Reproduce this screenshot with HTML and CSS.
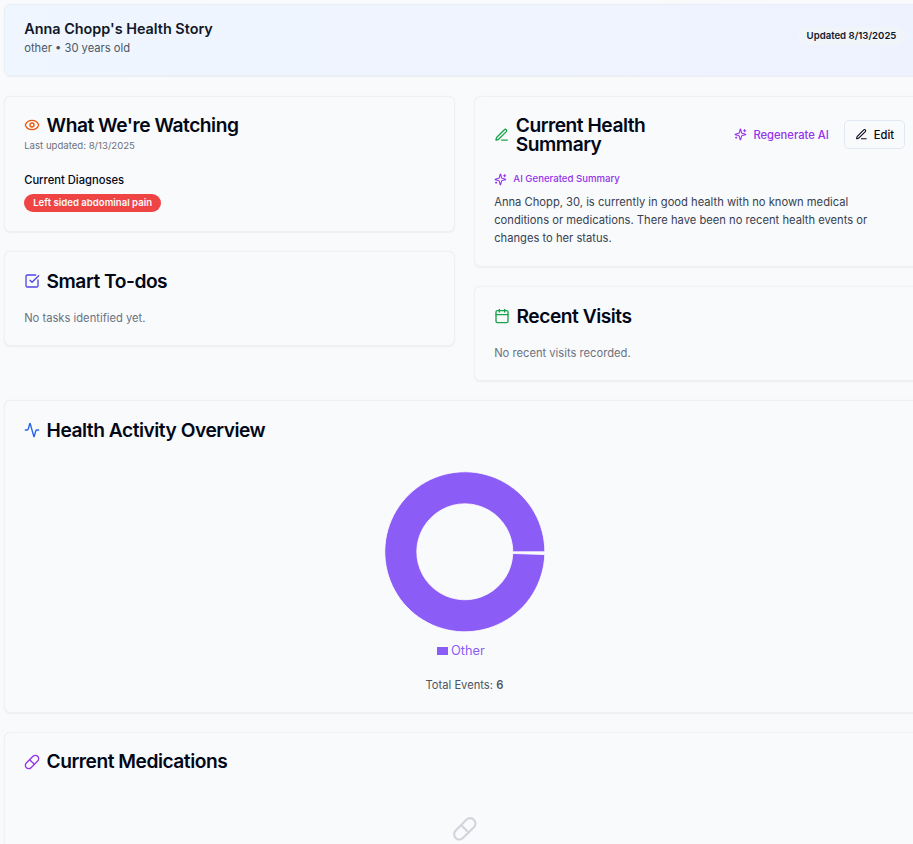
FILE: index.html
```
<!DOCTYPE html>
<html lang="en">

<head>
    <meta charset="UTF-8">
    <meta name="viewport" content="width=device-width, initial-scale=1.0">
    <title>Health Story</title>
    <link rel="stylesheet" href="styles.css">
</head>

<body>
    <div class="page">
        <header class="card story">
            <div>
                <h1>Anna Chopp's Health Story</h1>
                <p>other • 30 years old</p>
            </div>
            <span class="badge updated">Updated 8/13/2025</span>
        </header>

        <div class="columns">
            <div class="column">
                <section class="card">
                    <h3 class="title">
                        <svg class="icon orange" viewBox="0 0 24 24"><path d="M2.062 12.348a1 1 0 0 1 0-.696 10.75 10.75 0 0 1 19.876 0 1 1 0 0 1 0 .696 10.75 10.75 0 0 1-19.876 0"/><circle cx="12" cy="12" r="3"/></svg>
                        <span>What We're Watching</span>
                    </h3>
                    <p class="date">Last updated: 8/13/2025</p>
                    <div class="content">
                        <h4>Current Diagnoses</h4>
                        <span class="badge danger">Left sided abdominal pain</span>
                    </div>
                </section>

                <section class="card">
                    <h3 class="title">
                        <svg class="icon indigo" viewBox="0 0 24 24"><path d="M21 10.5V19a2 2 0 0 1-2 2H5a2 2 0 0 1-2-2V5a2 2 0 0 1 2-2h12.5"/><path d="m9 11 3 3L22 4"/></svg>
                        <span>Smart To-dos</span>
                    </h3>
                    <p class="content empty">No tasks identified yet.</p>
                </section>
            </div>

            <div class="column">
                <section class="card">
                    <div class="summary-head">
                        <h3 class="title">
                            <svg class="icon green" viewBox="0 0 24 24"><path d="M12 20h9"/><path d="M16.376 3.622a1 1 0 0 1 3.002 3.002L7.368 18.635a2 2 0 0 1-.855.506l-2.872.838a.5.5 0 0 1-.62-.62l.838-2.872a2 2 0 0 1 .506-.854z"/></svg>
                            <span>Current Health Summary</span>
                        </h3>
                        <div class="actions">
                            <button class="btn ghost">
                                <svg class="icon small" viewBox="0 0 24 24"><path d="M9.937 15.5A2 2 0 0 0 8.5 14.063l-6.135-1.582a.5.5 0 0 1 0-.962L8.5 9.936A2 2 0 0 0 9.937 8.5l1.582-6.135a.5.5 0 0 1 .963 0L14.063 8.5A2 2 0 0 0 15.5 9.937l6.135 1.581a.5.5 0 0 1 0 .964L15.5 14.063a2 2 0 0 0-1.437 1.437l-1.582 6.135a.5.5 0 0 1-.963 0z"/><path d="M20 3v4M22 5h-4M4 17v2M5 18H3"/></svg>
                                Regenerate AI
                            </button>
                            <button class="btn outline">
                                <svg class="icon small" viewBox="0 0 24 24"><path d="M12 20h9"/><path d="M16.376 3.622a1 1 0 0 1 3.002 3.002L7.368 18.635a2 2 0 0 1-.855.506l-2.872.838a.5.5 0 0 1-.62-.62l.838-2.872a2 2 0 0 1 .506-.854z"/></svg>
                                Edit
                            </button>
                        </div>
                    </div>
                    <div class="content">
                        <div class="ai-label">
                            <svg class="icon small" viewBox="0 0 24 24"><path d="M9.937 15.5A2 2 0 0 0 8.5 14.063l-6.135-1.582a.5.5 0 0 1 0-.962L8.5 9.936A2 2 0 0 0 9.937 8.5l1.582-6.135a.5.5 0 0 1 .963 0L14.063 8.5A2 2 0 0 0 15.5 9.937l6.135 1.581a.5.5 0 0 1 0 .964L15.5 14.063a2 2 0 0 0-1.437 1.437l-1.582 6.135a.5.5 0 0 1-.963 0z"/><path d="M20 3v4M22 5h-4M4 17v2M5 18H3"/></svg>
                            AI Generated Summary
                        </div>
                        <p class="summary">Anna Chopp, 30, is currently in good health with no known medical conditions or medications. There have been no recent health events or changes to her status.</p>
                    </div>
                </section>

                <section class="card">
                    <h3 class="title">
                        <svg class="icon green" viewBox="0 0 24 24"><path d="M8 2v4M16 2v4M3 10h18"/><rect x="3" y="4" width="18" height="18" rx="2"/></svg>
                        <span>Recent Visits</span>
                    </h3>
                    <p class="content empty">No recent visits recorded.</p>
                </section>
            </div>
        </div>

        <section class="card">
            <h3 class="title">
                <svg class="icon blue" viewBox="0 0 24 24"><path d="M22 12h-2.48a2 2 0 0 0-1.93 1.46l-2.35 8.36a.25.25 0 0 1-.48 0L9.24 2.18a.25.25 0 0 0-.48 0l-2.35 8.36A2 2 0 0 1 4.49 12H2"/></svg>
                <span>Health Activity Overview</span>
            </h3>
            <div class="content chart">
                <!-- ring from 0 to 358 degrees -->
                <svg class="donut" width="202" height="202" viewBox="-101 -101 202 202">
                    <path d="M100 0A100 100 0 1 0 99.939 3.49L59.963 2.094A60 60 0 1 1 60 0Z"/>
                </svg>
                <div class="legend"><i></i>Other</div>
            </div>
            <p class="total">Total Events: <b>6</b></p>
        </section>

        <section class="card">
            <h3 class="title">
                <svg class="icon purple" viewBox="0 0 24 24"><path d="m10.5 20.5 10-10a4.95 4.95 0 1 0-7-7l-10 10a4.95 4.95 0 1 0 7 7Z"/><path d="m8.5 8.5 7 7"/></svg>
                <span>Current Medications</span>
            </h3>
            <div class="content no-meds">
                <svg class="icon large" viewBox="0 0 24 24"><path d="m10.5 20.5 10-10a4.95 4.95 0 1 0-7-7l-10 10a4.95 4.95 0 1 0 7 7Z"/><path d="m8.5 8.5 7 7"/></svg>
            </div>
        </section>
    </div>
</body>

</html>
```
FILE: styles.css
```
* {
    box-sizing: border-box;
}

html {
    overflow: hidden;
}

body {
    margin: 0;
    height: 844px;
    overflow: hidden;
    background: #f9fafc;
    color: #020817;
    font-family: Inter, "Liberation Sans", sans-serif;
}

h1, h3, h4, p {
    margin: 0;
}

/* compact view of the dashboard */
.page {
    zoom: 0.8;
    width: 1151px;
    margin-left: 5px;
    padding-top: 5px;
    display: flex;
    flex-direction: column;
    gap: 24px;
    font-size: 14px;
    line-height: 20px;
}

.card {
    padding: 24px;
    border: 1px solid #f0f1f4;
    border-radius: 8px;
    background: #f9fafc;
    box-shadow: 0 1px 2px rgba(0, 0, 0, 0.05);
}

.story {
    display: flex;
    justify-content: space-between;
    align-items: flex-start;
    height: 90.4px;
    padding-top: 16px;
    padding-right: 23px;
    border-color: #e9effa;
    background: linear-gradient(to right, #eff6ff, #eef2ff);
}

.story h1 {
    font-size: 18px;
    font-weight: 600;
    line-height: 28px;
    color: #111827;
}

.story p {
    color: #4b5563;
}

.badge {
    display: inline-block;
    padding: 2px 10px;
    border: 1px solid transparent;
    border-radius: 99px;
    font-size: 12px;
    font-weight: 600;
    line-height: 16px;
}

.updated {
    margin-top: 12px;
    background: #f1f4f9;
    color: #0f172a;
}

.danger {
    display: table;
    margin-top: 8px;
    background: #ef4444;
    color: #f8fafc;
}

.columns {
    display: grid;
    grid-template-columns: 1fr 1fr;
    gap: 24px;
}

.column {
    display: flex;
    flex-direction: column;
    gap: 24px;
}

.title {
    display: flex;
    align-items: center;
    gap: 8px;
    font-size: 24px;
    font-weight: 600;
    line-height: 24px;
    letter-spacing: -0.025em;
}

.icon {
    width: 20px;
    height: 20px;
    fill: none;
    stroke: currentColor;
    stroke-width: 2;
    stroke-linecap: round;
    stroke-linejoin: round;
}

.small {
    width: 16px;
    height: 16px;
    flex: none;
}

.large {
    width: 32px;
    height: 32px;
}

.orange { color: #ea580c; }
.indigo { color: #4f46e5; }
.green { color: #16a34a; }
.blue { color: #2563eb; }
.purple { color: #9333ea; }

.date {
    margin-top: 6px;
    font-size: 12px;
    line-height: 16px;
    color: #6b7280;
}

.content {
    margin-top: 24px;
}

h4 {
    font-size: 14px;
    font-weight: 500;
}

.empty {
    color: #6b7280;
}

.summary-head {
    display: flex;
    align-items: center;
    justify-content: space-between;
}

.actions {
    display: flex;
    flex: none;
    gap: 8px;
}

.btn {
    display: flex;
    align-items: center;
    gap: 8px;
    height: 36px;
    padding: 0 12px;
    border: 0;
    border-radius: 6px;
    background: none;
    font: 500 14px/20px Inter, sans-serif;
}

.ghost {
    padding-right: 11px;
    color: #9333ea;
}

.outline {
    border: 1px solid #e2e8f0;
    color: #020817;
}

.ai-label {
    display: flex;
    align-items: center;
    gap: 8px;
    font-size: 12px;
    font-weight: 500;
    line-height: 16px;
    color: #9333ea;
}

.summary {
    margin-top: 8.5px;
    line-height: 22.6px;
    color: #374151;
}

.chart {
    display: flex;
    flex-direction: column;
    align-items: center;
    height: 256px;
    padding-top: 15px;
}

.donut {
    flex: none;
}

.donut path {
    fill: #8b5cf6;
    stroke: #fff;
}

.legend {
    display: flex;
    align-items: center;
    gap: 4px;
    margin-top: 10px;
    margin-right: 9px;
    font-size: 16px;
    line-height: 24px;
    color: #8b5cf6;
}

.legend i {
    width: 14px;
    height: 10.5px;
    margin-top: 2px;
    background: #8b5cf6;
}

.total {
    margin-top: 16px;
    text-align: center;
    color: #4b5563;
}

.total b {
    font-weight: 600;
}

.no-meds {
    padding: 32px 0;
    text-align: center;
    color: #d1d5db;
}
```
